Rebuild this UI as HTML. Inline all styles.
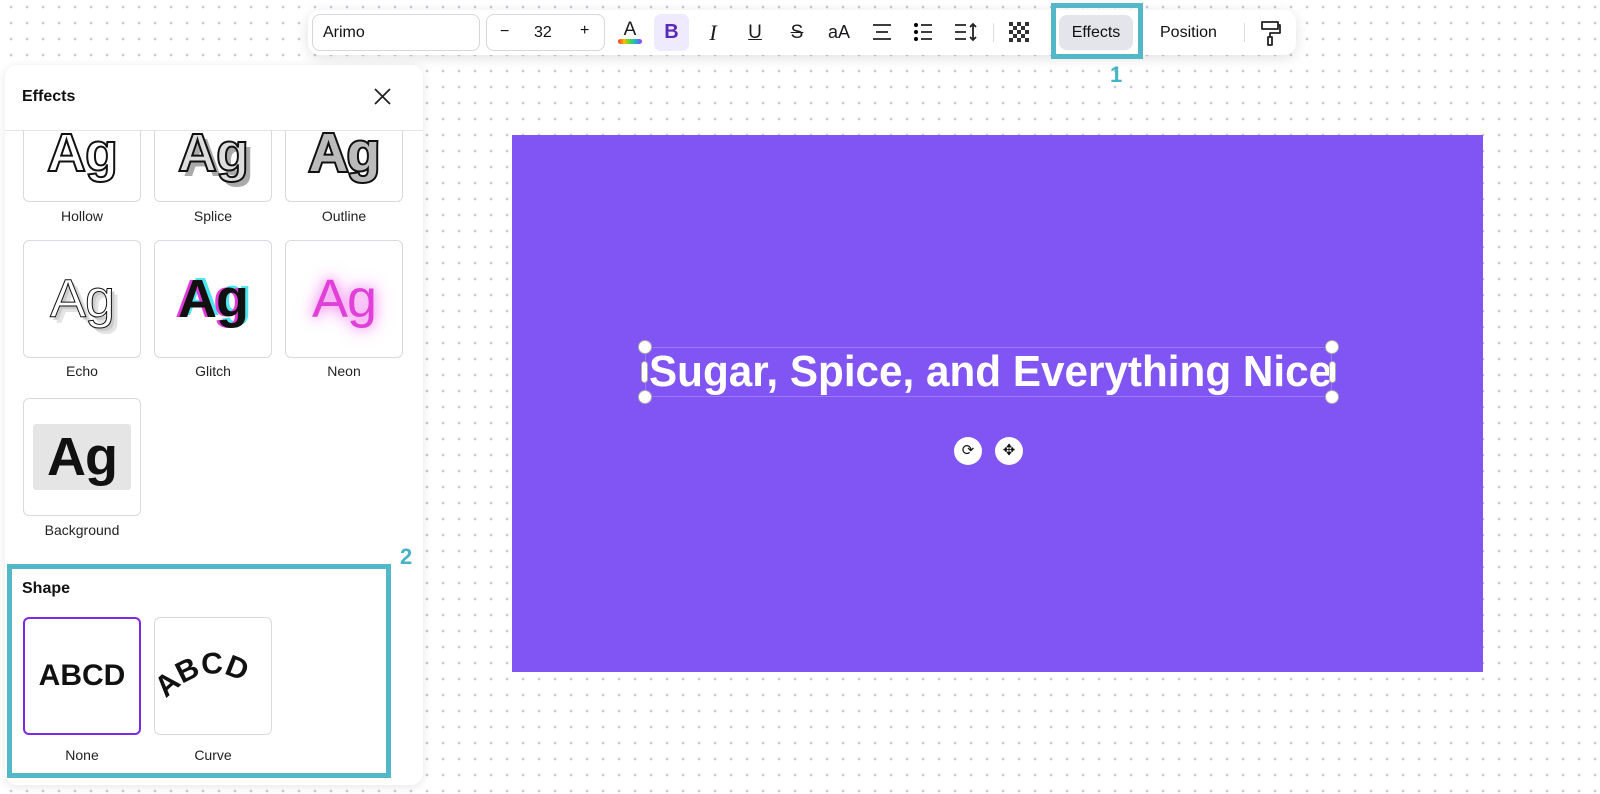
<!DOCTYPE html>
<html><head><meta charset="utf-8"><style>
*{box-sizing:border-box;margin:0;padding:0}
body{width:1600px;height:794px;overflow:hidden;position:relative;font-family:"Liberation Sans",sans-serif;color:#111;
background:#fff radial-gradient(circle,#c9cad3 1.1px,transparent 1.6px) 3px -1px/16px 16px;}
.abs{position:absolute}
.tb{left:308px;top:10px;width:988px;height:45px;background:#fff;border-radius:12px;box-shadow:0 3px 14px rgba(0,0,0,.12)}
.box{border:1px solid #d6d7dc;border-radius:8px;background:#fff}
.ic{position:absolute;top:10px;height:45px;display:flex;align-items:center;justify-content:center;font-size:19px;color:#1b1b1f;transform:translateX(-50%)}
.panel{left:5px;top:65px;width:418px;height:720px;background:#fff;border-radius:12px;box-shadow:0 2px 10px rgba(0,0,0,.1);overflow:hidden}
.tile{position:absolute;width:118px;height:118px;border:1px solid #d9dadf;border-radius:6px;background:#fff;display:flex;align-items:center;justify-content:center;overflow:hidden}
.lbl{position:absolute;width:118px;text-align:center;font-size:14px;color:#222}
.ag{font-size:54px;font-weight:bold;letter-spacing:-1px}
.teal{border:5px solid #52b8c8}
.num{color:#45b3c4;font-weight:bold;font-size:22px}
</style></head><body>

<div class="abs tb"></div>
<div class="abs box" style="left:312px;top:14px;width:168px;height:37px;font-size:16px;padding:9px 10px">Arimo</div>
<div class="abs box" style="left:486px;top:14px;width:119px;height:37px;font-size:16px">
<span class="abs" style="left:13px;top:8px">−</span><span class="abs" style="left:47px;top:9px">32</span><span class="abs" style="left:93px;top:7px">+</span></div>
<div class="ic" style="left:630px;flex-direction:column"><span style="font-size:19px;line-height:18px">A</span><span style="display:block;width:24px;height:5px;border-radius:3px;background:linear-gradient(90deg,#f33,#fb0,#4d4,#2ad,#a3f)"></span></div>
<div class="abs" style="left:654px;top:14px;width:35px;height:37px;background:#efeafe;border-radius:7px;color:#5a2bb5;font-weight:bold;font-size:20px;text-align:center;line-height:37px">B</div>
<div class="ic" style="left:713px;font-family:'Liberation Serif';font-style:italic;font-size:22px">I</div>
<div class="ic" style="left:755px;text-decoration:underline">U</div>
<div class="ic" style="left:797px;text-decoration:line-through">S</div>
<div class="ic" style="left:839px;font-size:18px">aA</div>
<svg class="abs" style="left:872px;top:23px" width="20" height="18"><path d="M1 2h18M4 9h12M1 16h18" stroke="#222" stroke-width="1.8"/></svg>
<svg class="abs" style="left:913px;top:23px" width="20" height="18"><circle cx="3" cy="2" r="2"/><circle cx="3" cy="9" r="2"/><circle cx="3" cy="16" r="2"/><path d="M8 2h11M8 9h11M8 16h11" stroke="#222" stroke-width="1.8"/></svg>
<svg class="abs" style="left:954px;top:22px" width="24" height="20"><path d="M1 3h11M1 10h11M1 17h11M19 2v16M16 5l3-3 3 3M16 15l3 3 3-3" stroke="#222" stroke-width="1.8" fill="none"/></svg>
<div class="abs" style="left:993px;top:23px;width:1px;height:19px;background:#ddd"></div>
<svg class="abs" style="left:1009px;top:22px" width="20" height="20"><g fill="#333"><rect x="0" y="0" width="4" height="4"/><rect x="8" y="0" width="4" height="4"/><rect x="16" y="0" width="4" height="4"/><rect x="4" y="4" width="4" height="4"/><rect x="12" y="4" width="4" height="4"/><rect x="0" y="8" width="4" height="4"/><rect x="8" y="8" width="4" height="4"/><rect x="16" y="8" width="4" height="4"/><rect x="4" y="12" width="4" height="4"/><rect x="12" y="12" width="4" height="4"/><rect x="0" y="16" width="4" height="4"/><rect x="8" y="16" width="4" height="4"/><rect x="16" y="16" width="4" height="4"/></g></svg>
<div class="abs teal" style="left:1051px;top:3px;width:92px;height:56px"></div>
<div class="abs" style="left:1059px;top:15px;width:74px;height:35px;background:#e4e5ea;border-radius:8px;font-size:16px;text-align:center;line-height:35px">Effects</div>
<div class="abs" style="left:1160px;top:24px;font-size:16px">Position</div>
<div class="abs" style="left:1244px;top:23px;width:1px;height:19px;background:#ddd"></div>
<svg class="abs" style="left:1260px;top:20px" width="22" height="26"><path d="M2 2h16v7H2zM18 5h2v8H10v4M8 17h4v8H8z" stroke="#222" stroke-width="1.8" fill="none" stroke-linejoin="round"/></svg>
<div class="abs num" style="left:1110px;top:62px">1</div>

<div class="abs panel">
<div class="abs" style="left:0;top:0;width:418px;height:66px;border-bottom:1px solid #e3e3e8;background:#fff;z-index:2"></div>
<div class="abs" style="left:17px;top:23px;font-weight:bold;font-size:16px;z-index:3">Effects</div>
<svg class="abs" style="left:369px;top:23px;z-index:3" width="17" height="17"><path d="M1 1l15 15M16 1L1 16" stroke="#222" stroke-width="1.8"/></svg>

<div class="tile" style="left:18px;top:19px"><span class="ag" style="color:#fff;-webkit-text-stroke:2px #111;margin-top:20px">Ag</span></div>
<div class="tile" style="left:149px;top:19px"><span class="ag" style="color:#ddd;-webkit-text-stroke:2px #111;text-shadow:5px 5px 0 #aaa;margin-top:20px">Ag</span></div>
<div class="tile" style="left:280px;top:19px"><span class="ag" style="color:#bbb;-webkit-text-stroke:4px #111;paint-order:stroke fill;margin-top:20px">Ag</span></div>
<div class="lbl" style="left:18px;top:143px">Hollow</div>
<div class="lbl" style="left:149px;top:143px">Splice</div>
<div class="lbl" style="left:280px;top:143px">Outline</div>

<div class="tile" style="left:18px;top:175px"><span class="ag" style="font-weight:normal;color:#fff;-webkit-text-stroke:1px #111;text-shadow:3px 3px 0 #ccc,6px 6px 0 #e3e3e3">Ag</span></div>
<div class="tile" style="left:149px;top:175px"><span class="ag" style="color:#111;text-shadow:-3px 0 0 #e23ad9,3px -2px 0 #4ee6ee">Ag</span></div>
<div class="tile" style="left:280px;top:175px"><span class="ag" style="font-weight:normal;color:#e040d8;text-shadow:0 0 12px #f07cf0,0 0 20px #f3a9f0">Ag</span></div>
<div class="lbl" style="left:18px;top:298px">Echo</div>
<div class="lbl" style="left:149px;top:298px">Glitch</div>
<div class="lbl" style="left:280px;top:298px">Neon</div>

<div class="tile" style="left:18px;top:333px"><div style="width:98px;height:66px;background:#e5e5e5;border-radius:3px;display:flex;align-items:center;justify-content:center"><span class="ag">Ag</span></div></div>
<div class="lbl" style="left:18px;top:457px">Background</div>

<div class="abs teal" style="left:2px;top:499px;width:384px;height:214px"></div>
<div class="abs" style="left:17px;top:515px;font-weight:bold;font-size:16px">Shape</div>
<div class="tile" style="left:18px;top:552px;border:2px solid #7d2ae8"><span style="font-weight:bold;font-size:30px">ABCD</span></div>
<div class="tile" style="left:149px;top:552px"><svg width="110" height="70"><defs><path id="c" d="M8 58 Q55 8 104 56"/></defs><text font-family="Liberation Sans" font-weight="bold" font-size="30" fill="#111"><textPath href="#c">ABCD</textPath></text></svg></div>
<div class="lbl" style="left:18px;top:682px">None</div>
<div class="lbl" style="left:149px;top:682px">Curve</div>
</div>
<div class="abs num" style="left:400px;top:544px">2</div>

<div class="abs" style="left:512px;top:135px;width:971px;height:537px;background:#8155f4"></div>
<div class="abs" style="left:645px;top:347px;width:687px;height:50px;border:1px solid #9a78f7"></div>
<div class="abs" style="left:649px;top:345px;width:682px;height:54px;color:#fff;font-weight:bold;font-size:44px;line-height:54px;white-space:nowrap;transform-origin:0 0;transform:scaleX(0.96)">Sugar, Spice, and Everything Nice</div>
<div class="abs" style="left:638px;top:340px;width:14px;height:14px;border-radius:50%;background:#fff;border:1px solid #aaa"></div>
<div class="abs" style="left:638px;top:390px;width:14px;height:14px;border-radius:50%;background:#fff;border:1px solid #aaa"></div>
<div class="abs" style="left:1325px;top:340px;width:14px;height:14px;border-radius:50%;background:#fff;border:1px solid #aaa"></div>
<div class="abs" style="left:1325px;top:390px;width:14px;height:14px;border-radius:50%;background:#fff;border:1px solid #aaa"></div>
<div class="abs" style="left:641px;top:361px;width:7px;height:22px;border-radius:4px;background:#fff;border:1px solid #aaa"></div>
<div class="abs" style="left:1329px;top:361px;width:7px;height:22px;border-radius:4px;background:#fff;border:1px solid #aaa"></div>
<div class="abs" style="left:954px;top:437px;width:28px;height:28px;border-radius:50%;background:#fff;font-size:15px;text-align:center;line-height:28px">⟳</div>
<div class="abs" style="left:995px;top:437px;width:28px;height:28px;border-radius:50%;background:#fff;font-size:15px;text-align:center;line-height:28px">✥</div>
</body></html>
